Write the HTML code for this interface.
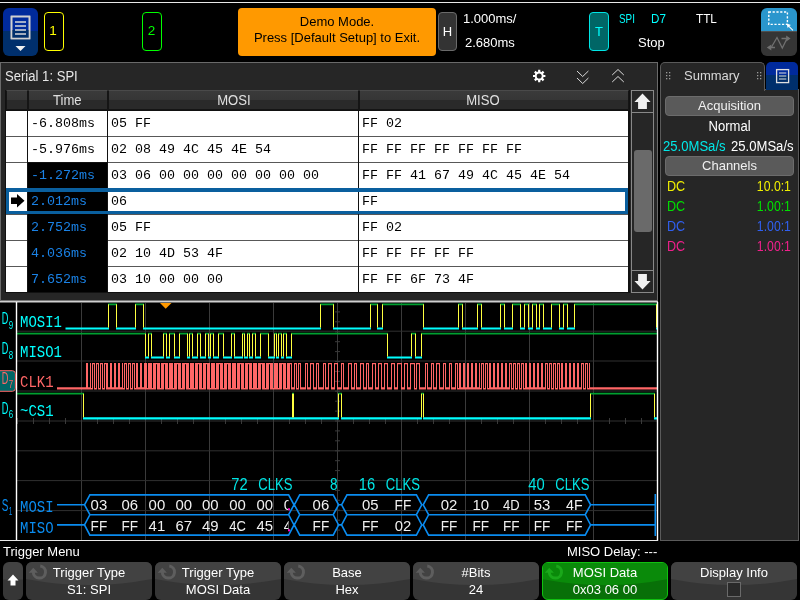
<!DOCTYPE html>
<html><head><meta charset="utf-8"><title>Scope</title><style>
html,body{margin:0;padding:0;background:#000;}
body{width:800px;height:600px;overflow:hidden;position:relative;font-family:"Liberation Sans",sans-serif;font-size:13px;color:#fff;}
div,span{box-sizing:border-box;}
.a{position:absolute;}
.t{position:absolute;white-space:nowrap;line-height:16px;}
.c{text-align:center;}
.sx{display:inline-block;font-size:14px;transform:scaleX(.935);transform-origin:50% 50%;}
.sl{transform-origin:0 50%;}
.sr{transform-origin:100% 50%;}
.mono{font-family:"Liberation Mono",monospace;}
svg{position:absolute;left:0;top:0;}
#root{position:absolute;left:0;top:0;width:800px;height:600px;will-change:transform;}
.cell{position:absolute;font-family:"Liberation Mono",monospace;font-size:13.33px;line-height:26px;height:26px;white-space:pre;color:#000;}
.key{position:absolute;top:562px;height:37.7px;width:126px;border-radius:6px;background:#353535;overflow:hidden;}
.key:before{content:"";position:absolute;left:-271px;width:668px;top:-645px;height:668px;border-radius:50%;background:#424242;}
.key .l1,.key .l2{position:absolute;left:0;right:0;text-align:center;line-height:16px;color:#fff;}
.key .l1{top:3px;}
.key .l2{top:20px;}
.key.g{background:#087008;border:1px solid #10c010;}.key.g:before{background:#0a8a0a;left:-272px;top:-646px;}.key.g .l1{top:2px;left:-1px;right:-1px}.key.g .l2{top:19px;left:-1px;right:-1px}
</style></head><body><div id="root">
<div class="a" style="left:0;top:2px;width:800px;height:1px;background:#e8e8e8"></div>
<div class="a" style="left:3px;top:8px;width:35px;height:48px;border-radius:6px;background:linear-gradient(#002a9c 0,#002a9c 48%,#002f6c 48%,#002f6c 100%)"></div>
<div class="a c" style="left:44px;top:12px;width:20px;height:39px;border:1px solid #ffff00;border-radius:4px;color:#ffff00;line-height:36px;font-size:13.5px;padding-right:2px">1</div>
<div class="a c" style="left:142px;top:12px;width:20px;height:39px;border:1px solid #00ff00;border-radius:4px;color:#00ff00;line-height:36px;font-size:13.5px;padding-right:1px">2</div>
<div class="a c" style="left:238px;top:8px;width:198px;height:48px;border-radius:4px;background:#ff9900;color:#000;line-height:16px;padding-top:6px">Demo Mode.<br>Press [Default Setup] to Exit.</div>
<div class="a c" style="left:438px;top:12px;width:19px;height:39px;border:1px solid #6a6a6a;border-radius:4px;background:#333;color:#fff;line-height:37px">H</div>
<div class="t" style="left:463px;top:11px">1.000ms/</div>
<div class="t" style="left:465px;top:35px">2.680ms</div>
<div class="a c" style="left:589px;top:12px;width:20px;height:39px;border:1px solid #00e5e5;border-radius:4px;background:#006666;color:#00ffff;line-height:37px">T</div>
<div class="t" style="left:618.5px;top:11px;color:#00ffff;font-size:12px;transform-origin:0 50%;transform:scaleX(0.82)">SPI</div>
<div class="t" style="left:651px;top:11px;color:#00ffff;font-size:12.5px;transform-origin:0 50%;transform:scaleX(0.93)">D7</div>
<div class="t" style="left:696px;top:11px;font-size:12.5px;transform-origin:0 50%;transform:scaleX(0.94)">TTL</div>
<div class="t" style="left:638px;top:35px">Stop</div>
<div class="a" style="left:760.5px;top:8px;width:36px;height:48px;border-radius:6px;background:linear-gradient(#2a96cd 0,#2a96cd 48%,#505050 48%,#505050 50%,#353535 50%,#353535 100%)"></div>
<div class="a" style="left:0;top:62px;width:658px;height:240px;background:#262626;border:1px solid #6a6a6a;border-bottom:2px solid #777"></div>
<div class="t" style="left:5px;top:68px;color:#e6e6e6"><span class="sx sl">Serial 1: SPI</span></div>
<div class="a" style="left:5px;top:90px;width:624.5px;height:203px;background:#111"></div>
<div class="a c" style="left:6px;top:90px;width:22px;height:20px;background:linear-gradient(#3a3a3a 0,#363636 50%,#2a2a2a 50%,#2a2a2a 100%);border:1px solid #151515;border-top-color:#4a4a4a;color:#e0e0e0;line-height:18px;padding-right:0px"><span class="sx"></span></div>
<div class="a c" style="left:28px;top:90px;width:80px;height:20px;background:linear-gradient(#3a3a3a 0,#363636 50%,#2a2a2a 50%,#2a2a2a 100%);border:1px solid #151515;border-top-color:#4a4a4a;color:#e0e0e0;line-height:18px;padding-right:2px"><span class="sx">Time</span></div>
<div class="a c" style="left:108px;top:90px;width:251px;height:20px;background:linear-gradient(#3a3a3a 0,#363636 50%,#2a2a2a 50%,#2a2a2a 100%);border:1px solid #151515;border-top-color:#4a4a4a;color:#e0e0e0;line-height:18px;padding-right:0px"><span class="sx">MOSI</span></div>
<div class="a c" style="left:359px;top:90px;width:270px;height:20px;background:linear-gradient(#3a3a3a 0,#363636 50%,#2a2a2a 50%,#2a2a2a 100%);border:1px solid #151515;border-top-color:#4a4a4a;color:#e0e0e0;line-height:18px;padding-right:22px"><span class="sx">MISO</span></div>
<div class="a" style="left:6px;top:136px;width:21px;height:1px;background:#585858"></div><div class="a" style="left:108px;top:136px;width:520px;height:1px;background:#585858"></div>
<div class="a" style="left:6px;top:162px;width:21px;height:1px;background:#585858"></div><div class="a" style="left:108px;top:162px;width:520px;height:1px;background:#585858"></div>
<div class="a" style="left:6px;top:188px;width:21px;height:1px;background:#585858"></div><div class="a" style="left:108px;top:188px;width:520px;height:1px;background:#585858"></div>
<div class="a" style="left:6px;top:214px;width:21px;height:1px;background:#585858"></div><div class="a" style="left:108px;top:214px;width:520px;height:1px;background:#585858"></div>
<div class="a" style="left:6px;top:240px;width:21px;height:1px;background:#585858"></div><div class="a" style="left:108px;top:240px;width:520px;height:1px;background:#585858"></div>
<div class="a" style="left:6px;top:266px;width:21px;height:1px;background:#585858"></div><div class="a" style="left:108px;top:266px;width:520px;height:1px;background:#585858"></div>
<div class="a" style="left:28px;top:136px;width:79px;height:1px;background:#585858"></div>
<div class="a" style="left:358px;top:111px;width:1px;height:181px;background:#111"></div>
<div class="a" style="left:6px;top:111px;width:21px;height:25px;background:#fff"></div>
<div class="cell" style="left:28px;top:111px;width:79px;height:25px;background:#fff;color:#000;padding-left:3px;line-height:25px">-6.808ms</div>
<div class="cell" style="left:108px;top:111px;width:250px;height:25px;background:#fff;padding-left:3px;line-height:25px">05 FF</div>
<div class="cell" style="left:359px;top:111px;width:269px;height:25px;background:#fff;padding-left:3px;line-height:25px">FF 02</div>
<div class="a" style="left:6px;top:137px;width:21px;height:25px;background:#fff"></div>
<div class="cell" style="left:28px;top:137px;width:79px;height:25px;background:#fff;color:#000;padding-left:3px;line-height:25px">-5.976ms</div>
<div class="cell" style="left:108px;top:137px;width:250px;height:25px;background:#fff;padding-left:3px;line-height:25px">02 08 49 4C 45 4E 54</div>
<div class="cell" style="left:359px;top:137px;width:269px;height:25px;background:#fff;padding-left:3px;line-height:25px">FF FF FF FF FF FF FF</div>
<div class="a" style="left:6px;top:163px;width:21px;height:25px;background:#fff"></div>
<div class="cell" style="left:28px;top:163px;width:79px;height:26px;background:#000;color:#1a82e6;padding-left:3px;line-height:25px">-1.272ms</div>
<div class="cell" style="left:108px;top:163px;width:250px;height:25px;background:#fff;padding-left:3px;line-height:25px">03 06 00 00 00 00 00 00 00</div>
<div class="cell" style="left:359px;top:163px;width:269px;height:25px;background:#fff;padding-left:3px;line-height:25px">FF FF 41 67 49 4C 45 4E 54</div>
<div class="a" style="left:6px;top:189px;width:21px;height:25px;background:#fff"></div>
<div class="cell" style="left:28px;top:189px;width:79px;height:26px;background:#000;color:#1a82e6;padding-left:3px;line-height:25px">2.012ms</div>
<div class="cell" style="left:108px;top:189px;width:250px;height:25px;background:#fff;padding-left:3px;line-height:25px">06</div>
<div class="cell" style="left:359px;top:189px;width:269px;height:25px;background:#fff;padding-left:3px;line-height:25px">FF</div>
<div class="a" style="left:6px;top:215px;width:21px;height:25px;background:#fff"></div>
<div class="cell" style="left:28px;top:215px;width:79px;height:26px;background:#000;color:#1a82e6;padding-left:3px;line-height:25px">2.752ms</div>
<div class="cell" style="left:108px;top:215px;width:250px;height:25px;background:#fff;padding-left:3px;line-height:25px">05 FF</div>
<div class="cell" style="left:359px;top:215px;width:269px;height:25px;background:#fff;padding-left:3px;line-height:25px">FF 02</div>
<div class="a" style="left:6px;top:241px;width:21px;height:25px;background:#fff"></div>
<div class="cell" style="left:28px;top:241px;width:79px;height:26px;background:#000;color:#1a82e6;padding-left:3px;line-height:25px">4.036ms</div>
<div class="cell" style="left:108px;top:241px;width:250px;height:25px;background:#fff;padding-left:3px;line-height:25px">02 10 4D 53 4F</div>
<div class="cell" style="left:359px;top:241px;width:269px;height:25px;background:#fff;padding-left:3px;line-height:25px">FF FF FF FF FF</div>
<div class="a" style="left:6px;top:267px;width:21px;height:25px;background:#fff"></div>
<div class="cell" style="left:28px;top:267px;width:79px;height:25px;background:#000;color:#1a82e6;padding-left:3px;line-height:25px">7.652ms</div>
<div class="cell" style="left:108px;top:267px;width:250px;height:25px;background:#fff;padding-left:3px;line-height:25px">03 10 00 00 00</div>
<div class="cell" style="left:359px;top:267px;width:269px;height:25px;background:#fff;padding-left:3px;line-height:25px">FF FF 6F 73 4F</div>
<div class="a" style="left:6px;top:188px;width:622px;height:26px;border:3px solid #0a5f9e;border-top-width:4px"></div>
<div class="a" style="left:631px;top:90px;width:23px;height:203px;background:#262626;border:1px solid #888"></div>
<div class="a" style="left:631px;top:90px;width:23px;height:23px;border:1px solid #888"></div>
<div class="a" style="left:631px;top:270px;width:23px;height:23px;border:1px solid #888"></div>
<div class="a" style="left:633.5px;top:150px;width:18px;height:81.5px;background:#6a6a6a;border-radius:3px"></div>
<div class="a" style="left:660px;top:89px;width:139px;height:452px;background:#262626;border:1px solid #5a5a5a;"></div>
<div class="a" style="left:660px;top:62px;width:105px;height:29px;background:#262626;border:1px solid #5a5a5a;border-bottom:none;border-radius:5px 5px 0 0"></div>
<div class="a" style="left:766px;top:62px;width:32px;height:27.5px;border-radius:5px 5px 0 0;background:linear-gradient(#002a9c 0,#002a9c 48%,#002f6c 48%,#002f6c 100%)"></div>
<div class="t" style="left:684px;top:68px;color:#d8d8d8">Summary</div>
<div class="a c" style="left:665px;top:96px;width:129px;height:19.5px;border-radius:4px;background:#5a5a5a;border:1px solid #6c6c6c;color:#f0f0f0;line-height:17.5px">Acquisition</div>
<div class="t c" style="left:665px;top:118px;width:129px"><span class="sx">Normal</span></div>
<div class="t" style="left:663px;top:138px;color:#00e8e8"><span class="sx sl">25.0MSa/s</span></div>
<div class="t" style="left:731px;top:138px"><span class="sx sl">25.0MSa/s</span></div>
<div class="a c" style="left:665px;top:156px;width:129px;height:19.5px;border-radius:4px;background:#5a5a5a;border:1px solid #6c6c6c;color:#f0f0f0;line-height:17.5px">Channels</div>
<div class="t" style="left:666.6px;top:178px;color:#f0f000"><span class="sx sl" style="transform:scaleX(.9)">DC</span></div>
<div class="t" style="right:8.6px;top:178px;color:#f0f000"><span class="sx sr" style="transform:scaleX(.875)">10.0:1</span></div>
<div class="t" style="left:666.6px;top:198px;color:#00e000"><span class="sx sl" style="transform:scaleX(.9)">DC</span></div>
<div class="t" style="right:8.6px;top:198px;color:#00e000"><span class="sx sr" style="transform:scaleX(.875)">1.00:1</span></div>
<div class="t" style="left:666.6px;top:218px;color:#3060f0"><span class="sx sl" style="transform:scaleX(.9)">DC</span></div>
<div class="t" style="right:8.6px;top:218px;color:#3060f0"><span class="sx sr" style="transform:scaleX(.875)">1.00:1</span></div>
<div class="t" style="left:666.6px;top:238px;color:#f0208c"><span class="sx sl" style="transform:scaleX(.9)">DC</span></div>
<div class="t" style="right:8.6px;top:238px;color:#f0208c"><span class="sx sr" style="transform:scaleX(.875)">1.00:1</span></div>
<div class="t" style="left:3px;top:544px">Trigger Menu</div>
<div class="t" style="left:567px;top:544px">MISO Delay: ---</div>
<div class="a" style="left:3px;top:562px;width:20px;height:37.7px;border-radius:6px;background:linear-gradient(#424242 0,#424242 17px,#363636 18px,#363636 100%)"></div>
<div class="key" style="left:26px"><div class="l1">Trigger Type</div><div class="l2">S1: SPI</div></div>
<div class="key" style="left:155px"><div class="l1">Trigger Type</div><div class="l2">MOSI Data</div></div>
<div class="key" style="left:284px"><div class="l1">Base</div><div class="l2">Hex</div></div>
<div class="key" style="left:413px"><div class="l1">#Bits</div><div class="l2">24</div></div>
<div class="key g" style="left:542px"><div class="l1">MOSI Data</div><div class="l2">0x03 06 00</div></div>
<div class="key" style="left:671px"><div class="l1">Display Info</div><div class="l2"></div></div>
<div class="a" style="left:726.5px;top:582px;width:14.5px;height:14.6px;background:#2a2a2a;border:1px solid #6a6a6a"></div>
<svg width="800" height="600" viewBox="0 0 800 600">
<line x1="81.5" y1="303" x2="81.5" y2="540" stroke="#3a3a3a" stroke-width="1"/>
<line x1="145.5" y1="303" x2="145.5" y2="540" stroke="#3a3a3a" stroke-width="1"/>
<line x1="209.5" y1="303" x2="209.5" y2="540" stroke="#3a3a3a" stroke-width="1"/>
<line x1="273.5" y1="303" x2="273.5" y2="540" stroke="#3a3a3a" stroke-width="1"/>
<line x1="337.5" y1="303" x2="337.5" y2="540" stroke="#3a3a3a" stroke-width="1"/>
<line x1="401.5" y1="303" x2="401.5" y2="540" stroke="#3a3a3a" stroke-width="1"/>
<line x1="465.5" y1="303" x2="465.5" y2="540" stroke="#3a3a3a" stroke-width="1"/>
<line x1="529.5" y1="303" x2="529.5" y2="540" stroke="#3a3a3a" stroke-width="1"/>
<line x1="593.5" y1="303" x2="593.5" y2="540" stroke="#3a3a3a" stroke-width="1"/>
<line x1="17" y1="331.2" x2="657" y2="331.2" stroke="#303030" stroke-width="1"/>
<line x1="17" y1="361" x2="657" y2="361" stroke="#303030" stroke-width="1"/>
<line x1="17" y1="391" x2="657" y2="391" stroke="#303030" stroke-width="1"/>
<line x1="17" y1="421" x2="657" y2="421" stroke="#303030" stroke-width="1"/>
<line x1="17" y1="450.8" x2="657" y2="450.8" stroke="#303030" stroke-width="1"/>
<line x1="17" y1="480.6" x2="657" y2="480.6" stroke="#303030" stroke-width="1"/>
<line x1="17" y1="510.6" x2="657" y2="510.6" stroke="#303030" stroke-width="1"/>
<path d="M17.5 418V424 M33.5 418V424 M49.5 418V424 M65.5 418V424 M81.5 418V424 M97.5 418V424 M113.5 418V424 M129.5 418V424 M145.5 418V424 M161.5 418V424 M177.5 418V424 M193.5 418V424 M209.5 418V424 M225.5 418V424 M241.5 418V424 M257.5 418V424 M273.5 418V424 M289.5 418V424 M305.5 418V424 M321.5 418V424 M337.5 418V424 M353.5 418V424 M369.5 418V424 M385.5 418V424 M401.5 418V424 M417.5 418V424 M433.5 418V424 M449.5 418V424 M465.5 418V424 M481.5 418V424 M497.5 418V424 M513.5 418V424 M529.5 418V424 M545.5 418V424 M561.5 418V424 M577.5 418V424 M593.5 418V424 M609.5 418V424 M625.5 418V424 M641.5 418V424 M657.5 418V424 M335 311.9H340 M335 321.8H340 M335 331.8H340 M335 341.7H340 M335 351.6H340 M335 361.5H340 M335 371.4H340 M335 381.3H340 M335 391.2H340 M335 401.2H340 M335 411.1H340 M335 421.0H340 M335 430.9H340 M335 440.8H340 M335 450.8H340 M335 460.7H340 M335 470.6H340 M335 480.5H340 M335 490.4H340 M335 500.3H340 M335 510.2H340 M335 520.2H340 M335 530.1H340" stroke="#3a3a3a" stroke-width="1" fill="none"/>
<path d="M108.0 304.3H117.0 M135.0 304.3H144.0 M320.0 304.3H334.0 M370.0 304.3H378.0 M382.0 304.3H424.0 M458.0 304.3H463.0 M477.0 304.3H482.0 M500.0 304.3H505.0 M512.0 304.3H521.0 M524.0 304.3H529.0 M532.0 304.3H537.0 M539.0 304.3H544.0 M551.0 304.3H560.0 M563.0 304.3H568.0 M574.0 304.3H657.0" stroke="#00a030" stroke-width="1.8" fill="none"/>
<path d="M65.5 328.5H109.0 M116.0 328.5H136.0 M143.0 328.5H321.0 M333.0 328.5H371.0 M377.0 328.5H383.0 M423.0 328.5H459.0 M462.0 328.5H478.0 M481.0 328.5H501.0 M504.0 328.5H513.0 M520.0 328.5H525.0 M528.0 328.5H533.0 M536.0 328.5H540.0 M543.0 328.5H552.0 M559.0 328.5H564.0 M567.0 328.5H575.0 M656.0 328.5H657.5" stroke="#00ffff" stroke-width="2.2" fill="none"/>
<path d="M108.5 304.3V327.6 M116.5 304.3V327.6 M135.5 304.3V327.6 M143.5 304.3V327.6 M320.5 304.3V327.6 M333.5 304.3V327.6 M370.5 304.3V327.6 M377.5 304.3V327.6 M382.5 304.3V327.6 M423.5 304.3V327.6 M458.5 304.3V327.6 M462.5 304.3V327.6 M477.5 304.3V327.6 M481.5 304.3V327.6 M500.5 304.3V327.6 M504.5 304.3V327.6 M512.5 304.3V327.6 M520.5 304.3V327.6 M524.5 304.3V327.6 M528.5 304.3V327.6 M532.5 304.3V327.6 M536.5 304.3V327.6 M539.5 304.3V327.6 M543.5 304.3V327.6 M551.5 304.3V327.6 M559.5 304.3V327.6 M563.5 304.3V327.6 M567.5 304.3V327.6 M574.5 304.3V327.6 M656.5 304.3V327.6" stroke="#ffff40" stroke-width="1" fill="none"/>
<path d="M17.0 333.7H146.0 M148.0 333.7H152.0 M163.0 333.7H167.0 M169.0 333.7H175.0 M179.0 333.7H188.0 M189.0 333.7H193.0 M197.0 333.7H201.0 M205.0 333.7H209.0 M210.0 333.7H214.0 M218.0 333.7H224.0 M231.0 333.7H235.0 M242.0 333.7H245.0 M247.0 333.7H250.0 M252.0 333.7H256.0 M260.0 333.7H269.0 M274.0 333.7H277.0 M278.0 333.7H282.0 M283.0 333.7H287.0 M291.0 333.7H388.0 M411.0 333.7H416.0 M421.0 333.7H657.5" stroke="#00a030" stroke-width="1.8" fill="none"/>
<path d="M145.0 357.5H149.0 M151.0 357.5H164.0 M166.0 357.5H170.0 M174.0 357.5H180.0 M187.0 357.5H190.0 M192.0 357.5H198.0 M200.0 357.5H206.0 M208.0 357.5H211.0 M213.0 357.5H219.0 M223.0 357.5H232.0 M234.0 357.5H243.0 M244.0 357.5H248.0 M249.0 357.5H253.0 M255.0 357.5H261.0 M268.0 357.5H275.0 M276.0 357.5H279.0 M281.0 357.5H284.0 M286.0 357.5H292.0 M387.0 357.5H412.0 M415.0 357.5H422.0" stroke="#00ffff" stroke-width="2.2" fill="none"/>
<path d="M145.5 333.7V356.6 M148.5 333.7V356.6 M151.5 333.7V356.6 M163.5 333.7V356.6 M166.5 333.7V356.6 M169.5 333.7V356.6 M174.5 333.7V356.6 M179.5 333.7V356.6 M187.5 333.7V356.6 M189.5 333.7V356.6 M192.5 333.7V356.6 M197.5 333.7V356.6 M200.5 333.7V356.6 M205.5 333.7V356.6 M208.5 333.7V356.6 M210.5 333.7V356.6 M213.5 333.7V356.6 M218.5 333.7V356.6 M223.5 333.7V356.6 M231.5 333.7V356.6 M234.5 333.7V356.6 M242.5 333.7V356.6 M244.5 333.7V356.6 M247.5 333.7V356.6 M249.5 333.7V356.6 M252.5 333.7V356.6 M255.5 333.7V356.6 M260.5 333.7V356.6 M268.5 333.7V356.6 M274.5 333.7V356.6 M276.5 333.7V356.6 M278.5 333.7V356.6 M281.5 333.7V356.6 M283.5 333.7V356.6 M286.5 333.7V356.6 M291.5 333.7V356.6 M387.5 333.7V356.6 M411.5 333.7V356.6 M415.5 333.7V356.6 M421.5 333.7V356.6" stroke="#ffff40" stroke-width="1" fill="none"/>
<path d="M17.0 393.7H84.0 M292.0 393.7H294.0 M338.0 393.7H342.0 M421.0 393.7H424.0 M590.0 393.7H655.0" stroke="#00a030" stroke-width="1.8" fill="none"/>
<path d="M83.0 418.3H293.0 M293.0 418.3H339.0 M341.0 418.3H422.0 M423.0 418.3H591.0 M654.0 418.3H657.5" stroke="#00ffff" stroke-width="2.2" fill="none"/>
<path d="M83.5 393.7V417.40000000000003 M292.5 393.7V417.40000000000003 M293.5 393.7V417.40000000000003 M338.5 393.7V417.40000000000003 M341.5 393.7V417.40000000000003 M421.5 393.7V417.40000000000003 M423.5 393.7V417.40000000000003 M590.5 393.7V417.40000000000003 M654.5 393.7V417.40000000000003" stroke="#ffff40" stroke-width="1" fill="none"/>
<path d="M86 363H88V389.6H86Z M90 363H91V389.6H90Z M92 363H93V389.6H92Z M94 363H95V389.6H94Z M96 363H97V389.6H96Z M98 363H99V389.6H98Z M100 363H101V389.6H100Z M102 363H103V389.6H102Z M104 363H105V389.6H104Z M106 363H108V389.6H106Z M110 363H112V389.6H110Z M114 363H116V389.6H114Z M118 363H120V389.6H118Z M122 363H123V389.6H122Z M124 363H125V389.6H124Z M126 363H127V389.6H126Z M128 363H129V389.6H128Z M130 363H131V389.6H130Z M132 363H133V389.6H132Z M134 363H135V389.6H134Z M136 363H138V389.6H136Z M140 363H142V389.6H140Z M144 363H147V389.6H144Z M148 363H152V389.6H148Z M153 363H156V389.6H153Z M157 363H160V389.6H157Z M161 363H164V389.6H161Z M165 363H168V389.6H165Z M169 363H173V389.6H169Z M174 363H177V389.6H174Z M178 363H181V389.6H178Z M182 363H185V389.6H182Z M186 363H189V389.6H186Z M190 363H194V389.6H190Z M195 363H198V389.6H195Z M199 363H202V389.6H199Z M203 363H206V389.6H203Z M207 363H210V389.6H207Z M211 363H215V389.6H211Z M216 363H219V389.6H216Z M220 363H223V389.6H220Z M224 363H227V389.6H224Z M228 363H231V389.6H228Z M232 363H236V389.6H232Z M237 363H240V389.6H237Z M241 363H244V389.6H241Z M245 363H248V389.6H245Z M249 363H252V389.6H249Z M253 363H257V389.6H253Z M258 363H261V389.6H258Z M262 363H265V389.6H262Z M266 363H269V389.6H266Z M270 363H273V389.6H270Z M274 363H278V389.6H274Z M279 363H282V389.6H279Z M283 363H286V389.6H283Z M287 363H290V389.6H287Z M291 363H292V389.6H291Z M294 363H295V389.6H294Z M296 363H297V389.6H296Z M298 363H299V389.6H298Z M300 363H301V389.6H300Z M305 363H306V389.6H305Z M307 363H308V389.6H307Z M310 363H311V389.6H310Z M313 363H314V389.6H313Z M316 363H317V389.6H316Z M318 363H319V389.6H318Z M323 363H324V389.6H323Z M325 363H326V389.6H325Z M328 363H329V389.6H328Z M331 363H332V389.6H331Z M334 363H335V389.6H334Z M337 363H338V389.6H337Z M341 363H342V389.6H341Z M343 363H344V389.6H343Z M348 363H349V389.6H348Z M351 363H352V389.6H351Z M354 363H355V389.6H354Z M356 363H357V389.6H356Z M360 363H361V389.6H360Z M363 363H364V389.6H363Z M366 363H367V389.6H366Z M368 363H369V389.6H368Z M372 363H373V389.6H372Z M375 363H376V389.6H375Z M378 363H379V389.6H378Z M381 363H382V389.6H381Z M384 363H385V389.6H384Z M387 363H388V389.6H387Z M391 363H392V389.6H391Z M394 363H395V389.6H394Z M397 363H398V389.6H397Z M401 363H402V389.6H401Z M404 363H405V389.6H404Z M407 363H408V389.6H407Z M410 363H411V389.6H410Z M414 363H415V389.6H414Z M416 363H417V389.6H416Z M419 363H420V389.6H419Z M425 363H426V389.6H425Z M427 363H428V389.6H427Z M431 363H432V389.6H431Z M433 363H434V389.6H433Z M436 363H437V389.6H436Z M439 363H440V389.6H439Z M443 363H444V389.6H443Z M445 363H446V389.6H445Z M449 363H450V389.6H449Z M451 363H452V389.6H451Z M455 363H456V389.6H455Z M457 363H458V389.6H457Z M459 363H461V389.6H459Z M463 363H465V389.6H463Z M467 363H469V389.6H467Z M471 363H473V389.6H471Z M475 363H477V389.6H475Z M479 363H480V389.6H479Z M481 363H482V389.6H481Z M483 363H484V389.6H483Z M485 363H486V389.6H485Z M487 363H488V389.6H487Z M489 363H491V389.6H489Z M493 363H495V389.6H493Z M497 363H499V389.6H497Z M501 363H503V389.6H501Z M505 363H507V389.6H505Z M509 363H510V389.6H509Z M511 363H512V389.6H511Z M513 363H514V389.6H513Z M515 363H516V389.6H515Z M517 363H518V389.6H517Z M519 363H520V389.6H519Z M521 363H522V389.6H521Z M523 363H524V389.6H523Z M525 363H527V389.6H525Z M529 363H531V389.6H529Z M533 363H535V389.6H533Z M537 363H539V389.6H537Z M541 363H543V389.6H541Z M545 363H546V389.6H545Z M547 363H548V389.6H547Z M549 363H550V389.6H549Z M551 363H552V389.6H551Z M553 363H554V389.6H553Z M555 363H556V389.6H555Z M557 363H558V389.6H557Z M559 363H560V389.6H559Z M561 363H563V389.6H561Z M565 363H567V389.6H565Z M569 363H571V389.6H569Z M573 363H575V389.6H573Z M577 363H579V389.6H577Z M581 363H582V389.6H581Z M583 363H584V389.6H583Z M585 363H586V389.6H585Z M587 363H588V389.6H587Z M589 363H590V389.6H589Z M93 363H94V364.3H93Z M97 363H98V364.3H97Z M101 363H102V364.3H101Z M105 363H106V364.3H105Z M125 363H126V364.3H125Z M129 363H130V364.3H129Z M133 363H134V364.3H133Z M156 363H157V364.3H156Z M164 363H165V364.3H164Z M177 363H178V364.3H177Z M185 363H186V364.3H185Z M198 363H199V364.3H198Z M206 363H207V364.3H206Z M219 363H220V364.3H219Z M227 363H228V364.3H227Z M240 363H241V364.3H240Z M248 363H249V364.3H248Z M261 363H262V364.3H261Z M269 363H270V364.3H269Z M282 363H283V364.3H282Z M290 363H291V364.3H290Z M295 363H296V364.3H295Z M299 363H300V364.3H299Z M306 363H307V364.3H306Z M311 363H313V364.3H311Z M317 363H318V364.3H317Z M324 363H325V364.3H324Z M329 363H331V364.3H329Z M335 363H337V364.3H335Z M342 363H343V364.3H342Z M349 363H351V364.3H349Z M355 363H356V364.3H355Z M361 363H363V364.3H361Z M367 363H368V364.3H367Z M373 363H375V364.3H373Z M379 363H381V364.3H379Z M385 363H387V364.3H385Z M392 363H394V364.3H392Z M398 363H401V364.3H398Z M405 363H407V364.3H405Z M411 363H414V364.3H411Z M417 363H419V364.3H417Z M426 363H427V364.3H426Z M432 363H433V364.3H432Z M437 363H439V364.3H437Z M444 363H445V364.3H444Z M450 363H451V364.3H450Z M456 363H457V364.3H456Z M482 363H483V364.3H482Z M486 363H487V364.3H486Z M510 363H511V364.3H510Z M514 363H515V364.3H514Z M518 363H519V364.3H518Z M522 363H523V364.3H522Z M546 363H547V364.3H546Z M550 363H551V364.3H550Z M554 363H555V364.3H554Z M558 363H559V364.3H558Z M582 363H583V364.3H582Z M586 363H587V364.3H586Z M57 387.3H86V389.6H57Z M88 387.3H90V389.6H88Z M91 388.0H92V389.6H91Z M95 388.0H96V389.6H95Z M99 388.0H100V389.6H99Z M103 388.0H104V389.6H103Z M108 387.3H110V389.6H108Z M112 387.3H114V389.6H112Z M116 387.3H118V389.6H116Z M120 387.3H122V389.6H120Z M123 388.0H124V389.6H123Z M127 388.0H128V389.6H127Z M131 388.0H132V389.6H131Z M135 388.0H136V389.6H135Z M138 387.3H140V389.6H138Z M142 387.3H144V389.6H142Z M147 388.0H148V389.6H147Z M152 388.0H153V389.6H152Z M160 388.0H161V389.6H160Z M168 388.0H169V389.6H168Z M173 388.0H174V389.6H173Z M181 388.0H182V389.6H181Z M189 388.0H190V389.6H189Z M194 388.0H195V389.6H194Z M202 388.0H203V389.6H202Z M210 388.0H211V389.6H210Z M215 388.0H216V389.6H215Z M223 388.0H224V389.6H223Z M231 388.0H232V389.6H231Z M236 388.0H237V389.6H236Z M244 388.0H245V389.6H244Z M252 388.0H253V389.6H252Z M257 388.0H258V389.6H257Z M265 388.0H266V389.6H265Z M273 388.0H274V389.6H273Z M278 388.0H279V389.6H278Z M286 388.0H287V389.6H286Z M292 387.3H294V389.6H292Z M297 388.0H298V389.6H297Z M301 387.3H305V389.6H301Z M308 387.3H310V389.6H308Z M314 387.3H316V389.6H314Z M319 387.3H323V389.6H319Z M326 387.3H328V389.6H326Z M332 387.3H334V389.6H332Z M338 387.3H341V389.6H338Z M344 387.3H348V389.6H344Z M352 387.3H354V389.6H352Z M357 387.3H360V389.6H357Z M364 387.3H366V389.6H364Z M369 387.3H372V389.6H369Z M376 387.3H378V389.6H376Z M382 387.3H384V389.6H382Z M388 387.3H391V389.6H388Z M395 387.3H397V389.6H395Z M402 387.3H404V389.6H402Z M408 387.3H410V389.6H408Z M415 388.0H416V389.6H415Z M420 387.3H425V389.6H420Z M428 387.3H431V389.6H428Z M434 387.3H436V389.6H434Z M440 387.3H443V389.6H440Z M446 387.3H449V389.6H446Z M452 387.3H455V389.6H452Z M458 388.0H459V389.6H458Z M461 387.3H463V389.6H461Z M465 387.3H467V389.6H465Z M469 387.3H471V389.6H469Z M473 387.3H475V389.6H473Z M477 387.3H479V389.6H477Z M480 388.0H481V389.6H480Z M484 388.0H485V389.6H484Z M488 388.0H489V389.6H488Z M491 387.3H493V389.6H491Z M495 387.3H497V389.6H495Z M499 387.3H501V389.6H499Z M503 387.3H505V389.6H503Z M507 387.3H509V389.6H507Z M512 388.0H513V389.6H512Z M516 388.0H517V389.6H516Z M520 388.0H521V389.6H520Z M524 388.0H525V389.6H524Z M527 387.3H529V389.6H527Z M531 387.3H533V389.6H531Z M535 387.3H537V389.6H535Z M539 387.3H541V389.6H539Z M543 387.3H545V389.6H543Z M548 388.0H549V389.6H548Z M552 388.0H553V389.6H552Z M556 388.0H557V389.6H556Z M560 388.0H561V389.6H560Z M563 387.3H565V389.6H563Z M567 387.3H569V389.6H567Z M571 387.3H573V389.6H571Z M575 387.3H577V389.6H575Z M579 387.3H581V389.6H579Z M584 388.0H585V389.6H584Z M588 388.0H589V389.6H588Z M590 387.3H657V389.6H590Z" fill="#ff6666"/>
<path d="M160 303H171.5L165.7 308.8Z" fill="#ff9900"/>
<path d="M0 301.75H658" stroke="#d0d0d0" stroke-width="1.5" fill="none"/>
<path d="M16.5 302V541 M657.5 302V541" stroke="#fff" stroke-width="1.4" fill="none"/>
<path d="M0 540.5H658" stroke="#e8e8e8" stroke-width="1.2" fill="none"/>
<rect x="-3" y="370.7" width="18.4" height="20.6" rx="3" fill="#006666" stroke="#ff6666" stroke-width="1"/>
<text x="1.7" y="324.4" font-family='"Liberation Sans", sans-serif' font-size="15.8" fill="#00ffff" text-anchor="start" textLength="6.6" lengthAdjust="spacingAndGlyphs">D</text>
<text x="8.8" y="328.8" font-family='"Liberation Sans", sans-serif' font-size="11" fill="#00ffff" text-anchor="start" textLength="4.4" lengthAdjust="spacingAndGlyphs">9</text>
<text x="20" y="327" font-family='"Liberation Mono", monospace' font-size="17.3" fill="#00ffff" text-anchor="start" textLength="42.0" lengthAdjust="spacingAndGlyphs">MOSI1</text>
<text x="1.7" y="354.29999999999995" font-family='"Liberation Sans", sans-serif' font-size="15.8" fill="#00ffff" text-anchor="start" textLength="6.6" lengthAdjust="spacingAndGlyphs">D</text>
<text x="8.8" y="358.7" font-family='"Liberation Sans", sans-serif' font-size="11" fill="#00ffff" text-anchor="start" textLength="4.4" lengthAdjust="spacingAndGlyphs">8</text>
<text x="20" y="356.9" font-family='"Liberation Mono", monospace' font-size="17.3" fill="#00ffff" text-anchor="start" textLength="42.0" lengthAdjust="spacingAndGlyphs">MISO1</text>
<text x="1.7" y="383.9" font-family='"Liberation Sans", sans-serif' font-size="15.8" fill="#ff6666" text-anchor="start" textLength="6.6" lengthAdjust="spacingAndGlyphs">D</text>
<text x="8.8" y="388.3" font-family='"Liberation Sans", sans-serif' font-size="11" fill="#ff6666" text-anchor="start" textLength="4.4" lengthAdjust="spacingAndGlyphs">7</text>
<text x="20" y="386.5" font-family='"Liberation Mono", monospace' font-size="17.3" fill="#ff6666" text-anchor="start" textLength="33.6" lengthAdjust="spacingAndGlyphs">CLK1</text>
<text x="1.7" y="413.7" font-family='"Liberation Sans", sans-serif' font-size="15.8" fill="#00ffff" text-anchor="start" textLength="6.6" lengthAdjust="spacingAndGlyphs">D</text>
<text x="8.8" y="418.1" font-family='"Liberation Sans", sans-serif' font-size="11" fill="#00ffff" text-anchor="start" textLength="4.4" lengthAdjust="spacingAndGlyphs">6</text>
<text x="20" y="416.3" font-family='"Liberation Mono", monospace' font-size="17.3" fill="#00ffff" text-anchor="start" textLength="33.6" lengthAdjust="spacingAndGlyphs">~CS1</text>
<path d="M57 504.8H84.5 M84.5 504.8L89.9 494.9H288.6L294.0 504.8L288.6 514.7H89.9Z M294.3 504.8L299.7 494.9H333.20000000000005L338.6 504.8L333.20000000000005 514.7H299.7Z M341.6 504.8L347.0 494.9H416.40000000000003L421.8 504.8L416.40000000000003 514.7H347.0Z M423.2 504.8L428.59999999999997 494.9H585.2L590.6 504.8L585.2 514.7H428.59999999999997Z M338.6 504.8H341.6 M590.6 504.8H655 M57 524.9000000000001H84.5 M84.5 524.9000000000001L89.9 514.7H288.6L294.0 524.9000000000001L288.6 535.1H89.9Z M294.3 524.9000000000001L299.7 514.7H333.20000000000005L338.6 524.9000000000001L333.20000000000005 535.1H299.7Z M341.6 524.9000000000001L347.0 514.7H416.40000000000003L421.8 524.9000000000001L416.40000000000003 535.1H347.0Z M423.2 524.9000000000001L428.59999999999997 514.7H585.2L590.6 524.9000000000001L585.2 535.1H428.59999999999997Z M338.6 524.9000000000001H341.6 M590.6 524.9000000000001H655 M655.3 494V536" stroke="#0a8cf0" stroke-width="1.6" fill="none" stroke-linejoin="miter"/>
<text x="1.8" y="511.2" font-family='"Liberation Sans", sans-serif' font-size="16" fill="#0a8cf0" text-anchor="start" textLength="6.6" lengthAdjust="spacingAndGlyphs">S</text>
<text x="8.8" y="515.2" font-family='"Liberation Sans", sans-serif' font-size="10.5" fill="#0a8cf0" text-anchor="start" textLength="3.6" lengthAdjust="spacingAndGlyphs">1</text>
<text x="20" y="511.5" font-family='"Liberation Mono", monospace' font-size="16" fill="#0a8cf0" text-anchor="start" textLength="33.5" lengthAdjust="spacingAndGlyphs">MOSI</text>
<text x="20" y="532.5" font-family='"Liberation Mono", monospace' font-size="16" fill="#0a8cf0" text-anchor="start" textLength="33.5" lengthAdjust="spacingAndGlyphs">MISO</text>
<text x="292.5" y="490.4" font-family='"Liberation Sans", sans-serif' font-size="15.8" fill="#00e5e5" text-anchor="end" textLength="34.2" lengthAdjust="spacingAndGlyphs">CLKS</text>
<text x="247.7" y="490.4" font-family='"Liberation Sans", sans-serif' font-size="15.8" fill="#00e5e5" text-anchor="end" textLength="16.4" lengthAdjust="spacingAndGlyphs">72</text>
<text x="420" y="490.4" font-family='"Liberation Sans", sans-serif' font-size="15.8" fill="#00e5e5" text-anchor="end" textLength="34.2" lengthAdjust="spacingAndGlyphs">CLKS</text>
<text x="375.2" y="490.4" font-family='"Liberation Sans", sans-serif' font-size="15.8" fill="#00e5e5" text-anchor="end" textLength="16.4" lengthAdjust="spacingAndGlyphs">16</text>
<text x="589.4" y="490.4" font-family='"Liberation Sans", sans-serif' font-size="15.8" fill="#00e5e5" text-anchor="end" textLength="34.2" lengthAdjust="spacingAndGlyphs">CLKS</text>
<text x="544.6" y="490.4" font-family='"Liberation Sans", sans-serif' font-size="15.8" fill="#00e5e5" text-anchor="end" textLength="16.4" lengthAdjust="spacingAndGlyphs">40</text>
<text x="337.6" y="490.4" font-family='"Liberation Sans", sans-serif' font-size="15.8" fill="#00e5e5" text-anchor="end" textLength="7.6" lengthAdjust="spacingAndGlyphs">8</text>
<text x="90.6" y="510.3" font-family='"Liberation Sans", sans-serif' font-size="15.2" fill="#f0f0f0" text-anchor="start" textLength="16.6" lengthAdjust="spacingAndGlyphs">03</text>
<text x="121.4" y="510.3" font-family='"Liberation Sans", sans-serif' font-size="15.2" fill="#f0f0f0" text-anchor="start" textLength="16.6" lengthAdjust="spacingAndGlyphs">06</text>
<text x="148.6" y="510.3" font-family='"Liberation Sans", sans-serif' font-size="15.2" fill="#f0f0f0" text-anchor="start" textLength="16.6" lengthAdjust="spacingAndGlyphs">00</text>
<text x="175.5" y="510.3" font-family='"Liberation Sans", sans-serif' font-size="15.2" fill="#f0f0f0" text-anchor="start" textLength="16.6" lengthAdjust="spacingAndGlyphs">00</text>
<text x="202" y="510.3" font-family='"Liberation Sans", sans-serif' font-size="15.2" fill="#f0f0f0" text-anchor="start" textLength="16.6" lengthAdjust="spacingAndGlyphs">00</text>
<text x="229.3" y="510.3" font-family='"Liberation Sans", sans-serif' font-size="15.2" fill="#f0f0f0" text-anchor="start" textLength="16.6" lengthAdjust="spacingAndGlyphs">00</text>
<text x="256.5" y="510.3" font-family='"Liberation Sans", sans-serif' font-size="15.2" fill="#f0f0f0" text-anchor="start" textLength="16.6" lengthAdjust="spacingAndGlyphs">00</text>
<text x="90.6" y="530.6" font-family='"Liberation Sans", sans-serif' font-size="15.2" fill="#f0f0f0" text-anchor="start" textLength="16.6" lengthAdjust="spacingAndGlyphs">FF</text>
<text x="121.4" y="530.6" font-family='"Liberation Sans", sans-serif' font-size="15.2" fill="#f0f0f0" text-anchor="start" textLength="16.6" lengthAdjust="spacingAndGlyphs">FF</text>
<text x="148.6" y="530.6" font-family='"Liberation Sans", sans-serif' font-size="15.2" fill="#f0f0f0" text-anchor="start" textLength="16.6" lengthAdjust="spacingAndGlyphs">41</text>
<text x="175.5" y="530.6" font-family='"Liberation Sans", sans-serif' font-size="15.2" fill="#f0f0f0" text-anchor="start" textLength="16.6" lengthAdjust="spacingAndGlyphs">67</text>
<text x="202" y="530.6" font-family='"Liberation Sans", sans-serif' font-size="15.2" fill="#f0f0f0" text-anchor="start" textLength="16.6" lengthAdjust="spacingAndGlyphs">49</text>
<text x="229.3" y="530.6" font-family='"Liberation Sans", sans-serif' font-size="15.2" fill="#f0f0f0" text-anchor="start" textLength="16.6" lengthAdjust="spacingAndGlyphs">4C</text>
<text x="256.5" y="530.6" font-family='"Liberation Sans", sans-serif' font-size="15.2" fill="#f0f0f0" text-anchor="start" textLength="16.6" lengthAdjust="spacingAndGlyphs">45</text>
<clipPath id="cp"><rect x="280" y="495" width="8.6" height="40"/></clipPath>
<g clip-path="url(#cp)">
<text x="283.8" y="510.3" font-family='"Liberation Sans", sans-serif' font-size="15.2" fill="#f0f0f0" text-anchor="start" textLength="16.6" lengthAdjust="spacingAndGlyphs">00</text>
<text x="283.8" y="530.6" font-family='"Liberation Sans", sans-serif' font-size="15.2" fill="#f0f0f0" text-anchor="start" textLength="16.6" lengthAdjust="spacingAndGlyphs">4E</text>
</g>
<rect x="288" y="508.3" width="2" height="2" fill="#ff00cc"/><rect x="288" y="529.3" width="2" height="2" fill="#ff00cc"/>
<text x="312.6" y="510.3" font-family='"Liberation Sans", sans-serif' font-size="15.2" fill="#f0f0f0" text-anchor="start" textLength="16.6" lengthAdjust="spacingAndGlyphs">06</text>
<text x="312.6" y="530.6" font-family='"Liberation Sans", sans-serif' font-size="15.2" fill="#f0f0f0" text-anchor="start" textLength="16.6" lengthAdjust="spacingAndGlyphs">FF</text>
<text x="361.9" y="510.3" font-family='"Liberation Sans", sans-serif' font-size="15.2" fill="#f0f0f0" text-anchor="start" textLength="16.6" lengthAdjust="spacingAndGlyphs">05</text>
<text x="394.6" y="510.3" font-family='"Liberation Sans", sans-serif' font-size="15.2" fill="#f0f0f0" text-anchor="start" textLength="16.6" lengthAdjust="spacingAndGlyphs">FF</text>
<text x="361.9" y="530.6" font-family='"Liberation Sans", sans-serif' font-size="15.2" fill="#f0f0f0" text-anchor="start" textLength="16.6" lengthAdjust="spacingAndGlyphs">FF</text>
<text x="394.8" y="530.6" font-family='"Liberation Sans", sans-serif' font-size="15.2" fill="#f0f0f0" text-anchor="start" textLength="16.6" lengthAdjust="spacingAndGlyphs">02</text>
<text x="440.7" y="510.3" font-family='"Liberation Sans", sans-serif' font-size="15.2" fill="#f0f0f0" text-anchor="start" textLength="16.6" lengthAdjust="spacingAndGlyphs">02</text>
<text x="440.7" y="530.6" font-family='"Liberation Sans", sans-serif' font-size="15.2" fill="#f0f0f0" text-anchor="start" textLength="16.6" lengthAdjust="spacingAndGlyphs">FF</text>
<text x="472.5" y="510.3" font-family='"Liberation Sans", sans-serif' font-size="15.2" fill="#f0f0f0" text-anchor="start" textLength="16.6" lengthAdjust="spacingAndGlyphs">10</text>
<text x="472.5" y="530.6" font-family='"Liberation Sans", sans-serif' font-size="15.2" fill="#f0f0f0" text-anchor="start" textLength="16.6" lengthAdjust="spacingAndGlyphs">FF</text>
<text x="503" y="510.3" font-family='"Liberation Sans", sans-serif' font-size="15.2" fill="#f0f0f0" text-anchor="start" textLength="16.6" lengthAdjust="spacingAndGlyphs">4D</text>
<text x="503" y="530.6" font-family='"Liberation Sans", sans-serif' font-size="15.2" fill="#f0f0f0" text-anchor="start" textLength="16.6" lengthAdjust="spacingAndGlyphs">FF</text>
<text x="533.8" y="510.3" font-family='"Liberation Sans", sans-serif' font-size="15.2" fill="#f0f0f0" text-anchor="start" textLength="16.6" lengthAdjust="spacingAndGlyphs">53</text>
<text x="533.8" y="530.6" font-family='"Liberation Sans", sans-serif' font-size="15.2" fill="#f0f0f0" text-anchor="start" textLength="16.6" lengthAdjust="spacingAndGlyphs">FF</text>
<text x="566" y="510.3" font-family='"Liberation Sans", sans-serif' font-size="15.2" fill="#f0f0f0" text-anchor="start" textLength="16.6" lengthAdjust="spacingAndGlyphs">4F</text>
<text x="566" y="530.6" font-family='"Liberation Sans", sans-serif' font-size="15.2" fill="#f0f0f0" text-anchor="start" textLength="16.6" lengthAdjust="spacingAndGlyphs">FF</text>
<rect x="11.5" y="16.5" width="18" height="22" fill="#002a9c" stroke="#d0d0d0" stroke-width="1.6"/>
<rect x="11" y="30" width="19" height="9.3" fill="#002f6c"/><rect x="11.5" y="16.5" width="18" height="22" fill="none" stroke="#d0d0d0" stroke-width="1.6"/>
<path d="M15 22H26M15 26H26M15 30H26M15 34H26" stroke="#d8d8d8" stroke-width="1.3" fill="none"/>
<path d="M15.5 46H25.5L20.5 51Z" fill="#f0f0f0"/>
<rect x="768.8" y="12" width="18.6" height="12.4" fill="none" stroke="#fff" stroke-width="1.4" stroke-dasharray="2.2 1.6"/>
<path d="M786.5 23.5L791 25L789.3 26L793.3 30L792.6 30.7L788.6 26.7L787.8 28.3Z" fill="#fff"/>
<path d="M769 47.5H775M771.5 47L777 37.5L782.3 48L787 38.5M781.5 38.5H788" stroke="#707070" stroke-width="1.3" fill="none"/>
<path d="M766.8 47.5L771.3 44.6V50.4Z M790.6 38.5L786.2 35.6V41.4Z" fill="#707070"/>
<rect x="776.6" y="69.6" width="12" height="13" fill="none" stroke="#e0e0e0" stroke-width="1.3"/>
<path d="M779 73H786.3M779 76H786.3M779 79H786.3" stroke="#e0e0e0" stroke-width="1.1" fill="none"/>
<rect x="666" y="72" width="1.3" height="1.3" fill="#9a9a9a"/><rect x="666" y="75" width="1.3" height="1.3" fill="#9a9a9a"/><rect x="666" y="78" width="1.3" height="1.3" fill="#9a9a9a"/><rect x="669" y="72" width="1.3" height="1.3" fill="#9a9a9a"/><rect x="669" y="75" width="1.3" height="1.3" fill="#9a9a9a"/><rect x="669" y="78" width="1.3" height="1.3" fill="#9a9a9a"/><rect x="757" y="72" width="1.3" height="1.3" fill="#9a9a9a"/><rect x="757" y="75" width="1.3" height="1.3" fill="#9a9a9a"/><rect x="757" y="78" width="1.3" height="1.3" fill="#9a9a9a"/><rect x="760" y="72" width="1.3" height="1.3" fill="#9a9a9a"/><rect x="760" y="75" width="1.3" height="1.3" fill="#9a9a9a"/><rect x="760" y="78" width="1.3" height="1.3" fill="#9a9a9a"/>
<path d="M542.20 76.00L545.40 76.00 M541.32 78.12L543.58 80.38 M539.20 79.00L539.20 82.20 M537.08 78.12L534.82 80.38 M536.20 76.00L533.00 76.00 M537.08 73.88L534.82 71.62 M539.20 73.00L539.20 69.80 M541.32 73.88L543.58 71.62" stroke="#fff" stroke-width="2.2" fill="none"/>
<circle cx="539.2" cy="76" r="3.5" fill="none" stroke="#fff" stroke-width="1.9"/>
<path d="M577 71L582.7 76.5L588.4 71M577 78L582.7 83.5L588.4 78" stroke="#f0f0f0" stroke-width="0.9" fill="none"/>
<path d="M612.2 75L618 69.5L623.8 75M612.2 82L618 76.5L623.8 82" stroke="#f0f0f0" stroke-width="0.9" fill="none"/>
<path d="M642.5 93.6L650.6 102H646.9V109H638.1V102H634.4Z" fill="#f0f0f0"/>
<path d="M642.5 289.4L650.6 281H646.9V274H638.1V281H634.4Z" fill="#f0f0f0"/>
<path d="M11 197.5H17V194L24.5 200.7L17 207.4V204H11Z" fill="#000"/>
<path d="M13 574.5L18.5 580.5H15.5V585.5H10.5V580.5H7.5Z" fill="#fff"/>
<path d="M40.25 565.96A6.1 6.1 0 1 1 33.30 572.00" stroke="#5e5e5e" stroke-width="3" fill="none"/>
<path d="M28.70 572.80L33.30 567.80L37.90 572.80Z" fill="#5e5e5e"/>
<path d="M169.25 565.96A6.1 6.1 0 1 1 162.30 572.00" stroke="#5e5e5e" stroke-width="3" fill="none"/>
<path d="M157.70 572.80L162.30 567.80L166.90 572.80Z" fill="#5e5e5e"/>
<path d="M298.25 565.96A6.1 6.1 0 1 1 291.30 572.00" stroke="#5e5e5e" stroke-width="3" fill="none"/>
<path d="M286.70 572.80L291.30 567.80L295.90 572.80Z" fill="#5e5e5e"/>
<path d="M427.25 565.96A6.1 6.1 0 1 1 420.30 572.00" stroke="#5e5e5e" stroke-width="3" fill="none"/>
<path d="M415.70 572.80L420.30 567.80L424.90 572.80Z" fill="#5e5e5e"/>
<path d="M556.25 565.96A6.1 6.1 0 1 1 549.30 572.00" stroke="#1aa81a" stroke-width="3" fill="none"/>
<path d="M544.70 572.80L549.30 567.80L553.90 572.80Z" fill="#1aa81a"/>
</svg>
</div></body></html>
